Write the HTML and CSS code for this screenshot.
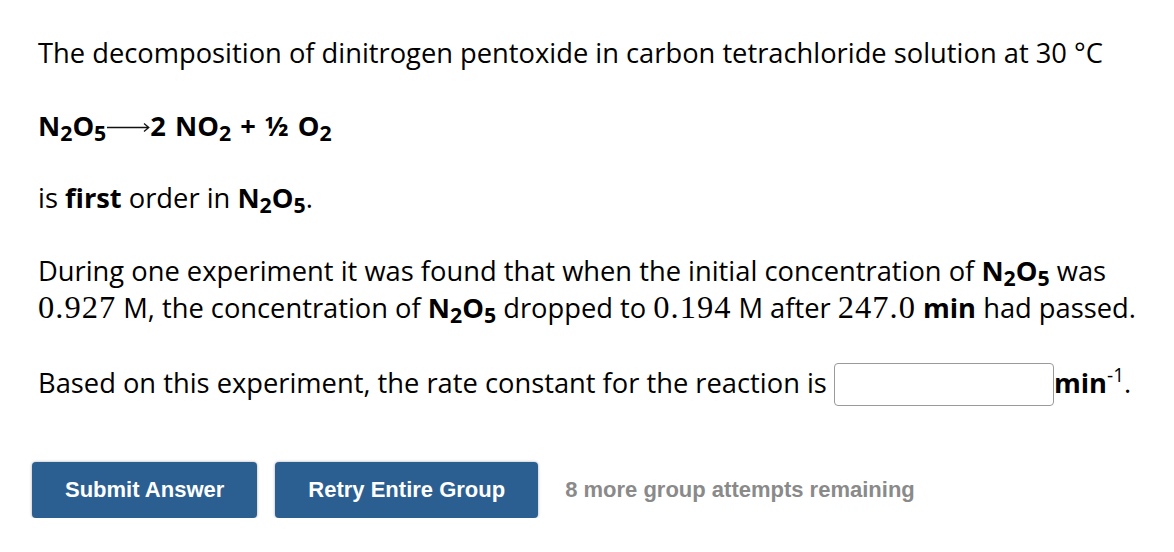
FILE: index.html
```html
<!DOCTYPE html>
<html>
<head>
<meta charset="utf-8">
<link rel="stylesheet" href="styles.css">
</head>
<body>
<div class="question">
  <p class="para">The decomposition of dinitrogen pentoxide in carbon tetrachloride solution at 30 °C</p>
  <p class="para eq"><b>N<sub>2</sub>O<sub>5</sub></b><svg class="arrow" width="44" height="12" viewBox="0 0 44 12"><path d="M1 6.5H42.5M38 2.5L42.8 6.5L38 10.5" fill="none" stroke="#111" stroke-width="1.3"/></svg><b class="products">2 NO<sub>2</sub> + ½ O<sub>2</sub></b></p>
  <p class="para">is <b>first</b> order in <b>N<sub>2</sub>O<sub>5</sub></b>.</p>
  <p class="para">During one experiment it was found that when the initial concentration of <b>N<sub>2</sub>O<sub>5</sub></b> was <span class="num">0.927</span> M, the concentration of <b>N<sub>2</sub>O<sub>5</sub></b> dropped to <span class="num">0.194</span> M after <span class="num">247.0</span> <b>min</b> had passed.</p>
  <p class="para answer">Based on this experiment, the rate constant for the reaction is <input class="box" type="text"><b>min</b><sup>-1</sup>.</p>
  <div class="actions">
    <button class="btn">Submit Answer</button>
    <button class="btn">Retry Entire Group</button>
    <span class="remaining">8 more group attempts remaining</span>
  </div>
</div>
</body>
</html>
```

FILE: styles.css
```css
html, body {
  margin: 0;
  padding: 0;
  background: #fff;
}
.question {
  padding: 35px 18px 0 38px;
  font-family: "Open Sans", "DejaVu Sans", sans-serif;
  font-size: 27.3px;
  color: #000;
}
.para {
  margin: 0 0 37px 0;
  line-height: 36px;
}
.para b {
  font-weight: 700;
}
.eq {
  margin-top: 1px;
  margin-bottom: 36px;
}
.products {
  word-spacing: 2px;
}
sub {
  font-size: 0.78em;
  vertical-align: -0.22em;
  line-height: 0;
}
sup {
  font-size: 0.7em;
  vertical-align: 0.55em;
  line-height: 0;
}
.arrow {
  vertical-align: 0.12em;
}
.num {
  font-family: "Liberation Serif", "Times New Roman", serif;
  font-size: 32.5px;
  letter-spacing: 1px;
}
.box {
  width: 220px;
  height: 43px;
  box-sizing: border-box;
  border: 1px solid #9a9a9a;
  border-radius: 4px;
  vertical-align: middle;
  margin: 0 0 2px 0;
  padding: 0;
  font-size: 18px;
}
.answer {
  margin-bottom: 0;
}
.actions {
  display: flex;
  align-items: center;
  gap: 18px;
  margin-top: 54px;
  margin-left: -6px;
}
.btn {
  height: 56px;
  padding: 0 33px;
  border: none;
  border-radius: 4px;
  background: #2b5f92;
  color: #fff;
  font-family: "Liberation Sans", Arial, sans-serif;
  font-weight: 700;
  font-size: 22px;
  box-shadow: 0 0 3px rgba(0, 0, 0, 0.35);
}
.remaining {
  margin-left: 9px;
  font-family: "Liberation Sans", Arial, sans-serif;
  font-weight: 700;
  font-size: 22px;
  color: #8a8a8a;
}
```
